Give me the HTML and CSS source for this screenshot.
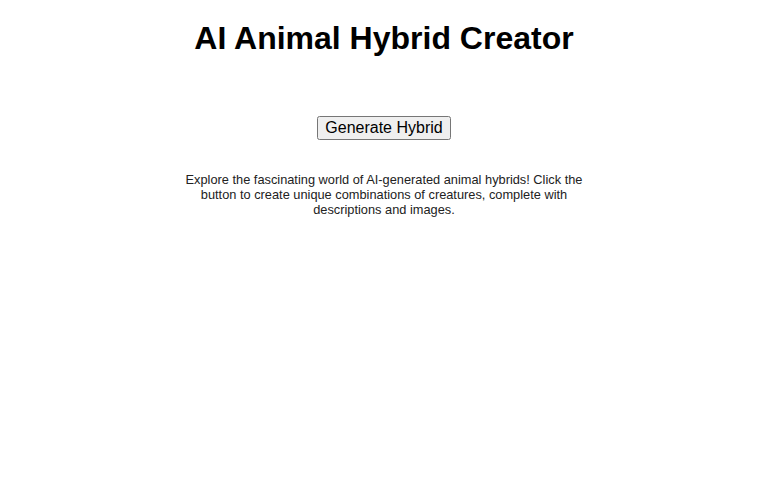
FILE: index.html
```html
<!DOCTYPE html>
<html>
<head>
<meta charset="utf-8">
<link rel="stylesheet" href="styles.css">
</head>
<body>
<div class="app">
  <h1 class="title">AI Animal Hybrid Creator</h1>
  <div class="controls">
    <button class="generate">Generate Hybrid</button>
  </div>
  <p class="intro">Explore the fascinating world of AI-generated animal hybrids! Click the button to create unique combinations of creatures, complete with descriptions and images.</p>
</div>
</body>
</html>
```

FILE: styles.css
```css
body {
  margin: 8px;
  font-family: "Liberation Sans", Arial, sans-serif;
  color: #000;
  background: #fff;
}
.app {
  display: flex;
  flex-direction: column;
  align-items: center;
  text-align: center;
}
.title {
  font-size: 32px;
  font-weight: bold;
  margin: 11.5px 0 0;
  line-height: 37px;
}
.controls {
  margin-top: 59px;
}
.generate {
  font-family: "Liberation Sans", Arial, sans-serif;
  font-size: 16px;
  padding: 1px 6px;
  line-height: 18px;
}
.intro {
  max-width: 400px;
  font-size: 12.8px;
  line-height: 15px;
  margin: 32px 0 0;
  color: #222;
}
```
